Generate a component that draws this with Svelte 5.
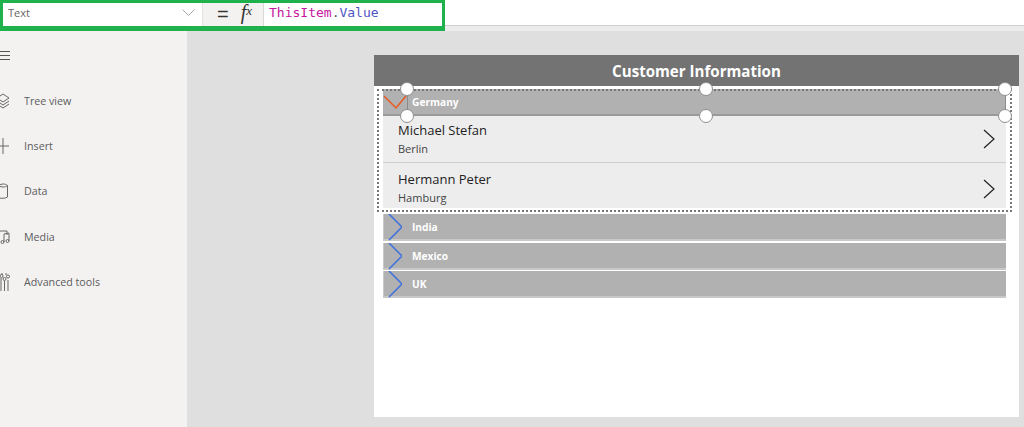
<script>
  const navItems = [
    { label: 'Tree view', icon: 'tree' },
    { label: 'Insert', icon: 'plus' },
    { label: 'Data', icon: 'data' },
    { label: 'Media', icon: 'media' },
    { label: 'Advanced tools', icon: 'tools' }
  ];
  const people = [
    { name: 'Michael Stefan', city: 'Berlin' },
    { name: 'Hermann Peter', city: 'Hamburg' }
  ];
  const collapsed = ['India', 'Mexico', 'UK'];
</script>

<div class="page">
  <header class="topbar">
    <div class="formula">
      <div class="prop">
        <span>Text</span>
        <svg width="13" height="7" viewBox="0 0 13 7"><path d="M.5.5l6 6 6-6" fill="none" stroke="#a6a6a6" stroke-width="1" /></svg>
      </div>
      <div class="fx">
        <span class="eq">=</span>
        <span class="fx-label">f<small>x</small></span>
      </div>
      <div class="code"><span class="kw">ThisItem</span>.<span class="field">Value</span></div>
    </div>
  </header>

  <div class="main">
    <aside class="sidebar">
      <div class="burger"><i></i><i></i><i></i></div>
      <nav>
        {#each navItems as item}
          <div class="nav-item">
            <svg class="nav-icon" width="10" height="18" viewBox="0 0 10 18" fill="none" stroke="#666" stroke-width="1">
              {#if item.icon === 'tree'}
                <path d="M-3 6L3 2l6 4-6 4zM-3 9l6 4 6-4M-3 12l6 4 6-4" />
              {:else if item.icon === 'plus'}
                <path d="M3 1v16M-4 9h13" />
              {:else if item.icon === 'data'}
                <path d="M-1 3.500C1 1.500 5.500 1.500 7.500 3.500V15C6 16.500 1 16.500-1 16M-1 3.500C1 5.500 5.500 5.500 7.500 3.500" />
              {:else if item.icon === 'media'}
                <path d="M-2 3h9v4M-2 12h2M4 6v8M4 6l5-1v8" /><circle cx="2.500" cy="14" r="1.500" /><circle cx="7.500" cy="13" r="1.500" />
              {:else}
                <path d="M1 5v13M4.500 8v10M6 0v2M2 0v2" /><path d="M8 7v11" /><circle cx="1.500" cy="3" r="1.500" /><circle cx="4.500" cy="6" r="1.500" /><circle cx="8" cy="3.500" r="1.500" />
              {/if}
            </svg>
            <span>{item.label}</span>
          </div>
        {/each}
      </nav>
    </aside>

    <main class="canvas">
      <section class="card">
        <h1>Customer Information</h1>
        <div class="gallery">
          <div class="group selected">
            <div class="row open">
              <svg class="arrow" width="24" height="27" viewBox="0 0 24 27"><path d="M1 7l12 12L23 7" fill="none" stroke="#ea5a1e" stroke-width="1.500" /></svg>
              <span>Germany</span>
            </div>
            {#each people as p}
              <div class="person">
                <div>
                  <div class="name">{p.name}</div>
                  <div class="city">{p.city}</div>
                </div>
                <svg width="12" height="20" viewBox="0 0 12 20"><path d="M1 1l10 9-10 9" fill="none" stroke="#222" stroke-width="1.200" /></svg>
              </div>
            {/each}
            <div class="handle h1"></div>
            <div class="handle h2"></div>
            <div class="handle h3"></div>
            <div class="handle h4"></div>
            <div class="handle h5"></div>
            <div class="handle h6"></div>
          </div>
          {#each collapsed as c}
            <div class="row closed">
              <svg class="arrow" width="14" height="27" viewBox="0 0 14 27"><path d="M1 0l13 13L1 26" fill="none" stroke="#3b6fe0" stroke-width="1.500" /></svg>
              <span>{c}</span>
            </div>
          {/each}
        </div>
      </section>
    </main>
  </div>
</div>

<style>
  :global(body) {
    margin: 0;
    background: #fff;
  }

  .page {
    width: 1024px;
    height: 427px;
    display: flex;
    flex-direction: column;
    overflow: hidden;
    font-family: "Open Sans", sans-serif;
  }

  .topbar {
    height: 31px;
    flex: none;
    background: linear-gradient(#fff 25px, #cfcfcf 25px, #cfcfcf 26px, #ececec 26px);
  }

  .formula {
    width: 445px;
    height: 31px;
    box-sizing: border-box;
    border: 3px solid #1fb14c;
    border-bottom-width: 5px;
    display: flex;
    background: #fff;
  }

  .prop {
    width: 200px;
    display: flex;
    align-items: center;
    justify-content: space-between;
    padding: 0 7px 5px 5px;
    box-sizing: border-box;
    font-size: 11px;
    color: #666;
    border-right: 1px solid #e2e2e2;
  }

  .fx {
    width: 61px;
    flex: none;
    background: #f3f2f1;
    border-right: 1px solid #d8d8d8;
    display: flex;
    align-items: center;
    gap: 12px;
    padding: 0 0 2px 14px;
    box-sizing: border-box;
    color: #333;
  }

  .eq {
    font: 20px/20px "Liberation Sans", sans-serif;
  }

  .fx-label {
    font: italic 20px/18px "Liberation Serif", serif;
    margin-top: -4px;
  }

  .fx-label small {
    font-size: 13px;
    line-height: 1;
    vertical-align: 4px;
  }

  .code {
    padding-left: 5px;
    font: 13px/20px "DejaVu Sans Mono", monospace;
    color: #555;
  }

  .kw {
    color: #c4189e;
  }

  .field {
    color: #4f55c4;
  }

  .main {
    flex: 1;
    display: flex;
    min-height: 0;
  }

  .sidebar {
    width: 187px;
    flex: none;
    background: #f3f2f1;
    padding-top: 20px;
    box-sizing: border-box;
  }

  .burger {
    width: 10px;
    display: flex;
    flex-direction: column;
    gap: 3px;
    height: 9px;
  }

  .burger i {
    display: block;
    height: 1px;
    background: #555;
  }

  nav {
    margin-top: 31px;
    display: flex;
    flex-direction: column;
    gap: 25.200px;
  }

  .nav-item {
    height: 20px;
    display: flex;
    align-items: center;
    gap: 14px;
    font-size: 10.700px;
    color: #5c5c5c;
  }

  .nav-icon {
    overflow: hidden;
    flex: none;
  }

  .canvas {
    flex: 1;
    background: #dfdfdf;
    padding: 24px 5px 10px 187px;
    min-width: 0;
  }

  .card {
    height: 100%;
    background: #fff;
    display: flex;
    flex-direction: column;
  }

  h1 {
    margin: 0;
    height: 31px;
    flex: none;
    background: #737373;
    color: #fff;
    font-size: 15.100px;
    font-weight: 700;
    line-height: 33px;
    text-align: center;
  }

  .gallery {
    padding: 3px 13px 0 9px;
    display: flex;
    flex-direction: column;
  }

  .group {
    position: relative;
    margin-bottom: 6px;
    background: #fff;
  }

  .group.selected::before {
    content: "";
    position: absolute;
    inset: 0 -6px -4px -6px;
    border: 2px dotted #777;
    z-index: 2;
    pointer-events: none;
  }

  .row {
    height: 27px;
    background: #b1b1b1;
    display: flex;
    align-items: center;
    position: relative;
    color: #fff;
    font-size: 10.200px;
    font-weight: 700;
    box-sizing: border-box;
  }

  .row span {
    position: absolute;
    left: 29px;
    top: 6px;
  }

  .row.open {
    border-bottom: 2px solid #9a9a9a;
  }

  .row.open::after {
    content: "";
    position: absolute;
    left: 24px;
    right: 0;
    top: 0;
    bottom: 0;
    border-left: 1px solid #8a8a8a;
    border-right: 1px solid #8a8a8a;
  }

  .row.closed {
    margin-bottom: 1.500px;
    border: 1px solid #c8c8c8;
    border-width: 0 0 2px 1px;
  }

  .row.closed span {
    left: 28px;
    top: 6px;
  }

  .arrow {
    position: absolute;
    left: 0;
    top: 0;
  }

  .row.closed .arrow {
    left: 4px;
  }

  .person {
    height: 47px;
    background: #ededed;
    display: flex;
    align-items: flex-start;
    justify-content: space-between;
    padding: 5px 11px 0 15px;
    box-sizing: border-box;
    border-bottom: 1px solid #cfcfcf;
  }

  .person + .person {
    height: 45px;
    padding-top: 7px;
    border-bottom: 0;
  }

  .person svg {
    margin-top: 8px;
  }

  .person + .person svg {
    margin-top: 9px;
  }

  .name {
    font-size: 13px;
    font-weight: 500;
    color: #222;
    line-height: 18px;
  }

  .city {
    font-size: 11px;
    color: #444;
    line-height: 18px;
    margin-top: 1px;
  }

  .handle {
    position: absolute;
    width: 12px;
    height: 12px;
    border-radius: 50%;
    background: #fff;
    border: 1px solid #8f8f8f;
    z-index: 3;
  }

  .h1 { left: 17px; top: -7px; }
  .h2 { left: 316px; top: -7px; }
  .h3 { right: -6px; top: -7px; }
  .h4 { left: 17px; top: 20px; }
  .h5 { left: 316px; top: 20px; }
  .h6 { right: -6px; top: 20px; }
</style>
